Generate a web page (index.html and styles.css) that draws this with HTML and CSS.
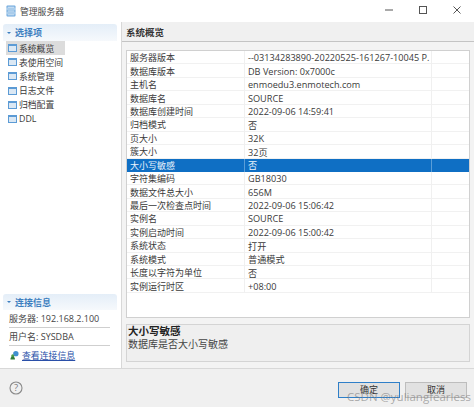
FILE: index.html
```html
<!DOCTYPE html>
<html lang="zh">
<head>
<meta charset="utf-8">
<title>管理服务器</title>
<link rel="stylesheet" href="styles.css">
</head>
<body>
<div class="window">
  <header class="titlebar">
    <svg class="app-icon" viewBox="0 0 10 12"><rect x="0.5" y="0.5" width="9" height="11" rx="1" fill="#6aa6dc"/><path d="M0.5 4h9M0.5 8h9" stroke="#e8f2fa" stroke-width="1"/><rect x="1.5" y="1.6" width="7" height="1.3" fill="#cfe3f4"/><rect x="1.5" y="5.4" width="7" height="1.3" fill="#cfe3f4"/><rect x="1.5" y="9.2" width="7" height="1.2" fill="#cfe3f4"/></svg>
    <span class="title">管理服务器</span>
    <div class="winctl">
      <svg viewBox="0 0 10 10"><path d="M1 5h8" stroke="#555" stroke-width="1"/></svg>
      <svg viewBox="0 0 10 10"><rect x="1.5" y="1.5" width="7" height="7" fill="none" stroke="#555" stroke-width="1"/></svg>
      <svg viewBox="0 0 10 10"><path d="M1.5 1.5l7 7M8.5 1.5l-7 7" stroke="#555" stroke-width="1"/></svg>
    </div>
  </header>
  <div class="main">
    <aside class="side">
      <div class="sec-head"><span class="tri"></span>选择项</div>
      <ul class="nav">
        <li class="on"><span class="nico"></span>系统概览</li>
        <li><span class="nico"></span>表使用空间</li>
        <li><span class="nico"></span>系统管理</li>
        <li><span class="nico"></span>日志文件</li>
        <li><span class="nico"></span>归档配置</li>
        <li><span class="nico"></span>DDL</li>
      </ul>
      <div class="conn">
        <div class="sec-head"><span class="tri"></span>连接信息</div>
        <div class="conn-row">服务器: 192.168.2.100</div>
        <div class="conn-row">用户名: SYSDBA</div>
        <div class="conn-link">
          <svg viewBox="0 0 10 10"><circle cx="6.5" cy="3.5" r="3" fill="#3f8fd0"/><circle cx="3" cy="6" r="1.7" fill="#4f9e4a"/><path d="M0.5 10c0-2.5 1.2-3 2.5-3s2.5.5 2.5 3z" fill="#2f7d3a"/></svg>
          <a href="#">查看连接信息</a>
        </div>
      </div>
    </aside>
    <section class="content">
      <h1 class="page-head">系统概览</h1>
      <div class="body">
        <div class="table">
          <div class="row"><span>服务器版本</span><span>--03134283890-20220525-161267-10045 P.</span><span></span></div>
          <div class="row"><span>数据库版本</span><span>DB Version: 0x7000c</span><span></span></div>
          <div class="row"><span>主机名</span><span>enmoedu3.enmotech.com</span><span></span></div>
          <div class="row"><span>数据库名</span><span>SOURCE</span><span></span></div>
          <div class="row"><span>数据库创建时间</span><span>2022-09-06 14:59:41</span><span></span></div>
          <div class="row"><span>归档模式</span><span>否</span><span></span></div>
          <div class="row"><span>页大小</span><span>32K</span><span></span></div>
          <div class="row"><span>簇大小</span><span>32页</span><span></span></div>
          <div class="row sel"><span>大小写敏感</span><span>否</span><span></span></div>
          <div class="row"><span>字符集编码</span><span>GB18030</span><span></span></div>
          <div class="row"><span>数据文件总大小</span><span>656M</span><span></span></div>
          <div class="row"><span>最后一次检查点时间</span><span>2022-09-06 15:06:42</span><span></span></div>
          <div class="row"><span>实例名</span><span>SOURCE</span><span></span></div>
          <div class="row"><span>实例启动时间</span><span>2022-09-06 15:00:42</span><span></span></div>
          <div class="row"><span>系统状态</span><span>打开</span><span></span></div>
          <div class="row"><span>系统模式</span><span>普通模式</span><span></span></div>
          <div class="row"><span>长度以字符为单位</span><span>否</span><span></span></div>
          <div class="row"><span>实例运行时区</span><span>+08:00</span><span></span></div>
        </div>
        <div class="desc">
          <div class="desc-t">大小写敏感</div>
          <div class="desc-b">数据库是否大小写敏感</div>
        </div>
      </div>
    </section>
  </div>
  <footer class="foot">
    <svg class="help" viewBox="0 0 14 14"><circle cx="7" cy="7" r="6" fill="none" stroke="#8a8a8a" stroke-width="1.1"/><text x="7" y="10.3" text-anchor="middle" class="help-q">?</text></svg>
    <div class="btns">
      <button class="btn primary">确定</button>
      <button class="btn">取消</button>
    </div>
  </footer>
  <div class="mark">CSDN @yuliangfearless</div>
</div>
</body>
</html>
```
FILE: styles.css
```css
* { box-sizing: border-box; }
html, body { margin: 0; padding: 0; }
body {
  width: 474px;
  height: 409px;
  overflow: hidden;
  background: #fff;
  font-family: "Open Sans", "Noto Sans CJK SC", sans-serif;
  font-size: 9px;
  color: #3a3a3a;
}
.window {
  position: relative;
  width: 474px;
  height: 409px;
  display: flex;
  flex-direction: column;
  background: #fff;
}
.titlebar {
  height: 22px;
  flex: none;
  display: flex;
  align-items: center;
  padding-left: 6px;
  background: #fff;
}
.app-icon { width: 10px; height: 12px; margin-right: 4px; }
.title { font-size: 8.8px; color: #444; }
.winctl { margin: 0 0 2px auto; display: flex; gap: 24px; padding-right: 12px; }
.winctl svg { width: 10px; height: 10px; display: block; }

.main { flex: none; height: 346px; display: flex; }
.side {
  width: 122px;
  flex: none;
  display: flex;
  flex-direction: column;
  padding: 2px 4px 0 3px;
  background: #fff;
  border-right: 1px solid #d8d8d8;
}
.sec-head {
  height: 17px;
  flex: none;
  display: flex;
  align-items: center;
  padding-left: 4px;
  font-size: 9px;
  font-weight: 700;
  color: #3d7fc0;
  border-radius: 3px 3px 0 0;
  background: linear-gradient(#e4eef8, #f6f9fc);
}
.tri {
  width: 0;
  height: 0;
  margin-right: 4px;
  border-left: 2px solid transparent;
  border-right: 2px solid transparent;
  border-top: 2.5px solid #3d7fc0;
}
.nav { list-style: none; margin: 0; padding: 0; flex: 1; }
.nav li {
  height: 14.2px;
  width: 59px;
  margin-left: 3px;
  display: flex;
  align-items: center;
  padding-left: 2px;
  font-size: 8.8px;
  white-space: nowrap;
}
.nav li.on { background: #dcdcdc; }
.nico {
  width: 9px;
  height: 8px;
  flex: none;
  margin-right: 2px;
  border: 1px solid #5c9bd5;
  border-top-width: 2px;
  background: #dbe8f4;
}
.conn { padding-bottom: 4px; }
.conn .sec-head { height: 16px; }
.conn-row {
  height: 18px;
  margin: 0 7px 0 6px;
  display: flex;
  align-items: center;
  font-size: 9px;
  color: #444;
  border-bottom: 1px solid #cfcfcf;
}
.conn-link {
  height: 18px;
  display: flex;
  align-items: center;
  padding-left: 7px;
  gap: 3px;
  font-size: 8.9px;
}
.conn-link svg { width: 9px; height: 10px; }
.conn-link a { color: #2a4fa8; text-decoration: underline; }

.content { flex: 1; display: flex; flex-direction: column; background: #f0f0f0; }
.page-head {
  margin: 0;
  height: 20px;
  flex: none;
  padding-left: 4px;
  display: flex;
  align-items: center;
  font-size: 9.5px;
  font-weight: 700;
  color: #333;
  background: #f0f0f0;
  border-bottom: 1px solid #c4c4c4;
}
.body { flex: 1; padding: 8px 4px 5px 4px; background: #f3f3f3; display: flex; flex-direction: column; gap: 6px; }
.table {
  height: 268px;
  flex: none;
  border: 1px solid #d0d0d0;
  background: #fff;
  overflow: hidden;
}
.row {
  height: 13.45px;
  display: grid;
  grid-template-columns: 118px 187px 1fr;
  align-items: center;
  box-shadow: inset 0 -1px 0 #f1f1f1;
  white-space: nowrap;
}
.row span { height: 100%; display: flex; align-items: center; padding-left: 3px; overflow: hidden; border-right: 1px solid #f0f0f0; }
.row span:nth-child(2) { font-size: 9.15px; }
.row span:last-child { border-right: 0; }
.row.sel { background: #0f6fc4; color: #eaf4fc; box-shadow: none; }
.row.sel span { border-right-color: #5a9ed8; }
.desc {
  height: 38px;
  flex: none;
  border: 1px solid #d4d4d4;
  background: #efefef;
  padding: 0 1px;
  line-height: 13px;
}
.desc-t { font-size: 10.5px; font-weight: 700; color: #222; }
.desc-b { font-size: 10px; color: #444; }

.foot {
  flex: none;
  height: 39px;
  display: flex;
  align-items: center;
  padding: 0 7px 0 9px;
  background: #f0f0f0;
  border-top: 1px solid #d8d8d8;
}
.help { width: 14px; height: 14px; }
.help-q { font-size: 9.5px; fill: #777; font-family: "Open Sans", sans-serif; }
.btns { margin-left: auto; display: flex; gap: 5px; padding-top: 3px; }
.btn {
  width: 62px;
  height: 16px;
  padding: 0;
  font-family: inherit;
  font-size: 9px;
  color: #333;
  background: #e1e1e1;
  border: 1px solid #bdbdbd;
}
.btn.primary { border: 1px solid #2f7fc8; }
.mark {
  position: absolute;
  left: 347px;
  top: 389px;
  font-family: "Open Sans", sans-serif;
  font-size: 11.5px;
  line-height: 15px;
  color: rgba(120, 120, 120, 0.6);
  white-space: nowrap;
}
```
